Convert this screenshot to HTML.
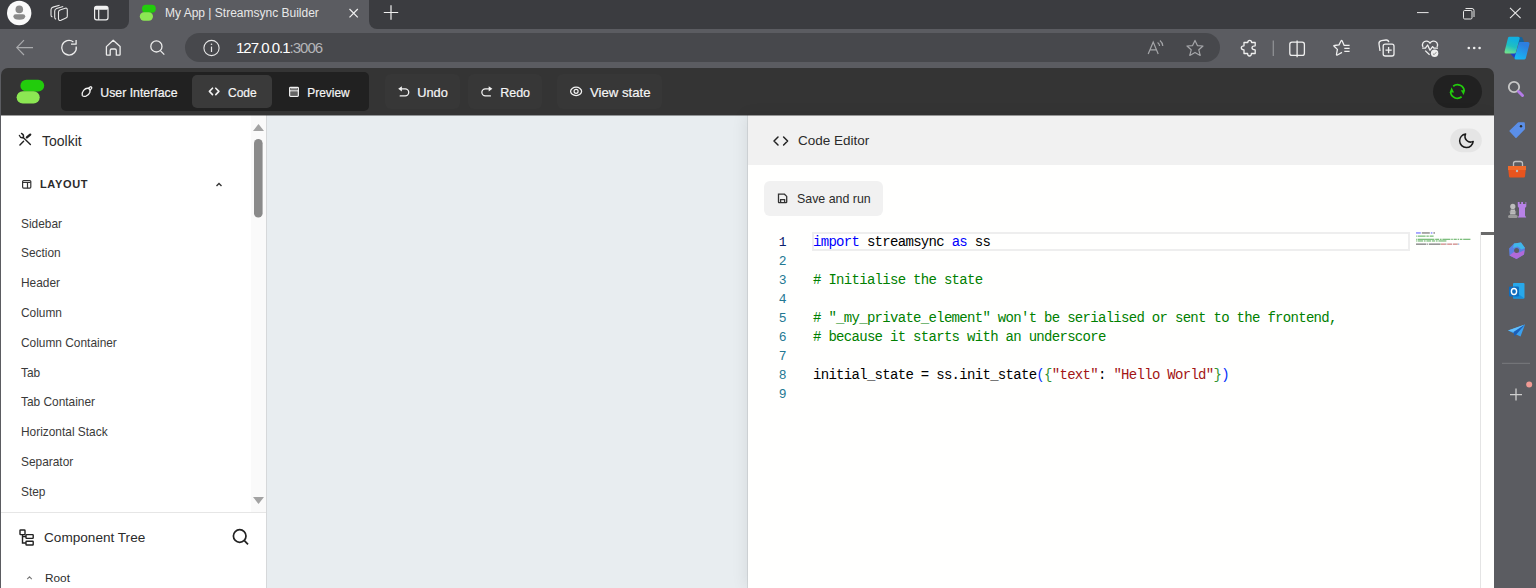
<!DOCTYPE html>
<html><head><meta charset="utf-8">
<style>
*{box-sizing:border-box;margin:0;padding:0}
html,body{width:1536px;height:588px;overflow:hidden;background:#5b5c61;font-family:"Liberation Sans",sans-serif;position:relative}
.abs{position:absolute}
svg{position:absolute;overflow:visible}
#tsl{left:0;top:0;width:129px;height:29px;background:#3b3c40;border-bottom-right-radius:8px}
#tsr{left:369px;top:0;width:1167px;height:29px;background:#3b3c40;border-bottom-left-radius:8px}
#pill{left:185px;top:33px;width:1035px;height:29px;background:#47484c;border-radius:15px}
#url{left:236px;top:39px;font-size:15px;letter-spacing:-1px;color:#fff;white-space:nowrap;line-height:18px}
#url span{color:#b4b5b8}
#tabtitle{left:165px;top:5px;font-size:12px;color:#e8e8e8;white-space:nowrap;line-height:16px}
#app{left:1px;top:68px;width:1493px;height:520px;background:#fff;border-radius:7px 7px 0 0;overflow:hidden}
#topbar{left:0;top:0;width:1493px;height:47px;background:#343434}
#side{left:0;top:47px;width:266px;height:473px;background:#fff;border-right:1px solid #d9d9d9}
#canvas{left:266px;top:47px;width:482px;height:473px;background:#e8edf0}
#editor{left:747px;top:47px;width:746px;height:473px;background:#fefefc}
#edhead{left:0;top:0;width:746px;height:50px;background:#f1f1f1}
#rsb{left:1494px;top:68px;width:42px;height:520px;background:#5b5c61}
.tb{top:85px;color:#f5f5f5;-webkit-text-stroke:0.2px #f5f5f5;line-height:16px;white-space:nowrap}
.code{font-family:"Liberation Mono",monospace;font-size:14px;letter-spacing:-0.7px;line-height:19px;color:#000;white-space:pre}
.k{color:#0000ff}.c{color:#008000}.s{color:#a31515}.b1{color:#0431fa}.b2{color:#319331}
</style></head><body>
<!-- tab strip -->
<div id="tsl" class="abs"></div>
<div id="tsr" class="abs"></div>
<svg style="left:0;top:0" width="130" height="29">
  <circle cx="19.2" cy="13" r="12.2" fill="#fafafa"/>
  <circle cx="19.3" cy="9.4" r="3.8" fill="#8a8a8a"/>
  <path d="M15.6 14.2 H23 Q25.2 14.2 25.2 16.3 Q25.2 19.8 19.3 19.8 Q13.4 19.8 13.4 16.3 Q13.4 14.2 15.6 14.2 Z" fill="#8a8a8a"/>
  <g fill="none" stroke="#e8e8e8" stroke-width="1.1">
    <path d="M59.6 5.2 L53 7.1 Q51 7.7 51 9.7 V15 Q51 16.6 52.4 16.9"/>
    <path d="M63.2 6.5 L56.6 8.5 Q54.7 9.1 54.7 11.1 V17.2 Q54.7 18.8 56.1 19.1"/>
    <path d="M60.6 9.7 L65.2 8.3 Q67.3 7.7 67.3 9.9 V16.2 Q67.3 17.6 65.9 18.1 L61 20.2 Q58.5 21.1 58.5 18.6 V11.9 Q58.5 10.3 60.6 9.7 Z"/>
  </g>
  <g fill="none" stroke="#f0f0f0" stroke-width="1.2">
    <rect x="94.6" y="6.4" width="13.4" height="13.4" rx="2"/>
    <path d="M98.7 9.5 V19.8"/>
  </g>
  <rect x="94.6" y="6.4" width="13.4" height="3.4" rx="1.5" fill="#f0f0f0"/>
</svg>
<svg style="left:139px;top:4px" width="18" height="18">
  <rect x="3" y="0.8" width="13.8" height="8" rx="4" fill="#22cc0c"/>
  <rect x="0.8" y="8.2" width="13.2" height="8.5" rx="4.2" fill="#8ce753"/>
</svg>
<div id="tabtitle" class="abs">My App | Streamsync Builder</div>
<svg style="left:348px;top:8px" width="12" height="12">
  <path d="M1.5 1 L9.8 9.3 M9.8 1 L1.5 9.3" stroke="#f0f0f0" stroke-width="1.2"/>
</svg>
<svg style="left:382px;top:4px" width="18" height="18">
  <path d="M9 1.2 V15.8 M1.8 8.5 H16.2" stroke="#f0f0f0" stroke-width="1.2"/>
</svg>
<!-- window controls -->
<svg style="left:1410px;top:4px" width="120" height="20">
  <path d="M7 8.6 H18.6" stroke="#e8e8e8" stroke-width="1"/>
  <rect x="53.5" y="6.5" width="8.5" height="8.5" rx="1.2" fill="none" stroke="#e8e8e8" stroke-width="1"/>
  <path d="M55.5 4.5 H62 Q64 4.5 64 6.5 V13" fill="none" stroke="#e8e8e8" stroke-width="1"/>
  <path d="M100 3.8 L110.6 14.2 M110.6 3.8 L100 14.2" stroke="#e8e8e8" stroke-width="1.1"/>
</svg>
<!-- toolbar -->
<svg style="left:0;top:30px" width="180" height="36">
  <g fill="none" stroke="#a9aaad" stroke-width="1.2">
    <path d="M17 17.6 H33 M24 10.2 L16.8 17.6 L24 25"/>
  </g>
  <g fill="none" stroke="#ececec" stroke-width="1.3" stroke-linejoin="round">
    <path d="M76.2 16.5 A7.3 7.3 0 1 1 73.4 11.9"/>
    <path d="M71 14.2 H76.1 V10"/>
    <path d="M106.4 16.6 L113.2 10.2 L120.1 16.6 V24.5 Q120.1 25.2 119.4 25.2 H116.3 V20.4 Q116.3 19 114.9 19 H111.6 Q110.2 19 110.2 20.4 V25.2 H107.1 Q106.4 25.2 106.4 24.5 Z"/>
    <circle cx="156.4" cy="16.4" r="5.6"/>
    <path d="M160.4 20.6 L164.3 24.6"/>
  </g>
</svg>
<div id="pill" class="abs"></div>
<svg style="left:200px;top:37px" width="24" height="24">
  <circle cx="11.5" cy="11" r="7.6" fill="none" stroke="#e6e6e6" stroke-width="1.1"/>
  <path d="M11.5 9.6 V15" stroke="#e6e6e6" stroke-width="1.2"/>
  <circle cx="11.5" cy="7.3" r="0.8" fill="#e6e6e6"/>
</svg>
<div id="url" class="abs">127.0.0.1<span>:3006</span></div>
<svg style="left:1140px;top:32px" width="400" height="32">
  <g fill="none" stroke="#a4a5a8" stroke-width="1.2">
    <path d="M8.2 22 L13.2 10 L18.2 22 M10 17.8 H16.4"/>
    <path d="M17.6 10.4 Q19.4 11.6 19.6 14 M19.9 8.4 Q22.6 10.4 22.8 14"/>
    <path d="M55 8.4 L57.4 13.6 L63 14 L58.8 17.8 L60.2 23.4 L55 20.4 L49.8 23.4 L51.2 17.8 L47 14 L52.6 13.6 Z" stroke-linejoin="round"/>
  </g>
  <path d="M133.3 8.6 V24" stroke="#8f9094" stroke-width="1.3"/>
  <g fill="none" stroke="#efefef" stroke-width="1.3" stroke-linejoin="round">
    <path d="M104 10.5 H107.8 Q107.8 8.3 109.7 8.3 Q111.6 8.3 111.6 10.5 H115.2 V13.8 Q112 13.8 112 15.8 Q112 17.8 115.2 17.8 V21.5 H111.4 Q111.4 24 109.5 24 Q107.6 24 107.6 21.5 H104 V17.8 Q101.3 17.8 101.3 15.8 Q101.3 13.8 104 13.8 Z"/>
    <rect x="149.8" y="10.2" width="14.6" height="13.2" rx="2.2"/>
    <path d="M157.1 8.4 V25.2"/>
    <path d="M202 20.4 L197.4 23 Q196.3 23.5 196.5 22.3 L197.4 17.4 L194.1 14.3 Q193.4 13.6 194.4 13.5 L199 12.9 L201.1 8.8 Q201.6 8 202.1 8.8 L204.2 13.4 H209.6 M204.3 16.4 H209.6 M204.3 19.4 H209.6"/>
    <path d="M240 19 L239 12 Q238.6 9.2 241.4 8.6 L246 8 Q248.4 7.8 248.8 10.2"/>
    <rect x="243.2" y="12.2" width="10.8" height="11.8" rx="2"/>
    <path d="M248.6 15 V21.2 M245.5 18.1 H251.7"/>
    <path d="M283 15 Q281.8 12.6 283 10.8 Q284.6 8.8 287 9.2 Q289 9.6 290 11.2 Q291 9.6 293 9.2 Q295.4 8.8 297 10.8 Q298.2 12.6 297 15"/>
    <path d="M282.2 16.2 H285.4 L287.6 13 L290 18.2 L292.6 14.6 L294 16.2 H298"/>
    <path d="M285.2 18.6 L289.6 22.8"/>
  </g>
  <circle cx="294.6" cy="21.3" r="3.7" fill="#efefef"/>
  <path d="M292.9 21.6 L294.1 22.7 L296.3 20.2" fill="none" stroke="#8a8a8a" stroke-width="1"/>
  <g fill="#efefef"><circle cx="328.8" cy="16" r="1.3"/><circle cx="334.2" cy="16" r="1.3"/><circle cx="339.6" cy="16" r="1.3"/></g>
</svg>
<svg style="left:1502px;top:36px" width="30" height="24">
  <defs>
    <linearGradient id="cp1" x1="0" y1="1" x2="0.3" y2="0"><stop offset="0" stop-color="#6fe08e"/><stop offset="0.5" stop-color="#1fc0c0"/><stop offset="1" stop-color="#12b0e0"/></linearGradient>
    <linearGradient id="cp2" x1="0" y1="1" x2="0.4" y2="0"><stop offset="0" stop-color="#16b8f4"/><stop offset="1" stop-color="#2d7fe0"/></linearGradient>
  </defs>
  <path d="M15.5 1.8 L19.5 1.8 L22 7.2 L17 7.2 Z" fill="#15649e" stroke="#15649e" stroke-width="1.5" stroke-linejoin="round"/>
  <path d="M8.5 16.5 L13 16.5 L13.8 22.6 Z" fill="#1f3fc4" stroke="#1f3fc4" stroke-width="1.5" stroke-linejoin="round"/>
  <path d="M7.5 2.2 L16.2 2.2 L12.4 16 L4 16 Z" fill="url(#cp1)" stroke="url(#cp1)" stroke-width="3" stroke-linejoin="round"/>
  <path d="M18.2 7.6 L26 7.6 L22.4 22 L14 22 Z" fill="url(#cp2)" stroke="url(#cp2)" stroke-width="3" stroke-linejoin="round"/>
</svg>
<!-- app -->
<div class="abs" style="left:1px;top:68px;width:1493px;height:47px;background:#343434;border-radius:7px 7px 0 0"></div>
<svg style="left:14px;top:78px" width="32" height="28">
  <rect x="6.4" y="1.7" width="23.8" height="11.9" rx="5.95" fill="#22cc0c"/>
  <rect x="2.6" y="13.2" width="23.1" height="12.3" rx="6.15" fill="#8ce753"/>
</svg>
<div class="abs" style="left:61px;top:72px;width:308px;height:39px;background:#212121;border-radius:5px"></div>
<div class="abs" style="left:192px;top:75px;width:80px;height:33px;background:#3a3a3a;border-radius:5px"></div>
<div class="abs" style="left:385px;top:74px;width:75px;height:35px;background:#373737;border-radius:6px"></div>
<div class="abs" style="left:468px;top:74px;width:74px;height:35px;background:#373737;border-radius:6px"></div>
<div class="abs" style="left:557px;top:74px;width:105px;height:35px;background:#373737;border-radius:6px"></div>
<div class="tb abs" style="left:100.3px;font-size:12.3px">User Interface</div>
<div class="tb abs" style="left:228px;font-size:12px">Code</div>
<div class="tb abs" style="left:307.3px;font-size:11.9px">Preview</div>
<div class="tb abs" style="left:417.2px;font-size:12.8px">Undo</div>
<div class="tb abs" style="left:500.2px;font-size:12.5px">Redo</div>
<div class="tb abs" style="left:590px;font-size:13.2px">View state</div>
<svg style="left:0;top:68px" width="700" height="47">
  <path d="M398.2 20.8 L401.9 18.2 V23.4 Z" fill="#f2f2f2"/>
  <path d="M492.4 20.8 L488.7 18.2 V23.4 Z" fill="#f2f2f2"/>
  <g fill="none" stroke="#f2f2f2" stroke-width="1.3" stroke-linejoin="round" stroke-linecap="round">
    <path d="M82.3 27.6 Q81.4 25.2 83.6 22.4 Q86 19.6 88.6 20.4 Q90.6 21.6 89.9 24.2 Q88.8 27.2 86 28.2 Q83.6 28.9 82.3 27.6 Z"/>
    <path d="M88.4 20.2 L90.4 18.8 Q91.6 18.6 91.8 20 L90.4 22"/>
    <path d="M212.5 20.2 L209.4 23.4 L212.5 26.6 M215.8 20.2 L218.9 23.4 L215.8 26.6" stroke-width="1.6"/>
    <rect x="289.7" y="19.3" width="8.6" height="9" rx="0.8"/>
    <path d="M291.2 20.9 H296.8" stroke-width="1"/>
    <path d="M289.8 22.9 H298.2" stroke-width="1.4"/>
    <rect x="290.4" y="23.8" width="7.2" height="3.8" fill="rgba(255,255,255,0.3)" stroke="none"/>
    <path d="M302 0"/>
    <path d="M401.6 20.8 H405.2 A3.55 3.55 0 0 1 405.2 27.9 H400.2"/>
    <path d="M489 20.8 H485.4 A3.55 3.55 0 0 0 485.4 27.9 H490.4"/>
    <ellipse cx="576.1" cy="23.35" rx="5.5" ry="4.2" stroke-width="1.25"/>
    <circle cx="576.1" cy="23.35" r="2" stroke-width="1.2"/>
  </g>
</svg>
<div class="abs" style="left:1433px;top:75px;width:49px;height:33px;background:#212121;border-radius:16.5px"></div>
<svg style="left:1445px;top:80px" width="24" height="24">
  <g fill="none" stroke="#22cc0c" stroke-width="1.8">
    <path d="M8.2 6.2 A6.8 6.8 0 0 1 19.2 11"/>
    <path d="M16.6 16.8 A6.8 6.8 0 0 1 5.6 12"/>
  </g>
  <path d="M15.8 10.2 L20.2 10.2 L18.6 14.9 Z" fill="#22cc0c"/>
  <path d="M4.6 12.6 L9 12.6 L6.6 7.3 Z" fill="#22cc0c"/>
</svg>
<!-- sidebar -->
<div class="abs" style="left:1px;top:115px;width:265px;height:473px;background:#fff"></div>
<div class="abs" style="left:251px;top:115px;width:15px;height:397px;background:#fafafa"></div>
<div class="abs" style="left:266px;top:115px;width:1px;height:473px;background:#d6d8da"></div>
<div class="abs" style="left:1px;top:512px;width:265px;height:1px;background:#e6e6e6"></div>
<svg style="left:251px;top:115px" width="15" height="400">
  <path d="M2 16 L7.5 9 L13 16 Z" fill="#a3a3a3"/>
  <rect x="3" y="24" width="8.6" height="78.5" rx="4.3" fill="#8a8a8a"/>
  <path d="M2 382 L7.5 389 L13 382 Z" fill="#a3a3a3"/>
</svg>
<div class="abs" style="left:42px;top:133px;font-size:14px;color:#2b2b2b;line-height:16px">Toolkit</div>
<div class="abs" style="left:40px;top:177px;font-size:11px;font-weight:bold;letter-spacing:0.65px;color:#2b2b2b;line-height:14px">LAYOUT</div>
<div id="items" class="abs" style="left:21px;top:209.7px;font-size:11.9px;color:#3a3a3a;line-height:29.8px">Sidebar<br>Section<br>Header<br>Column<br>Column Container<br>Tab<br>Tab Container<br>Horizontal Stack<br>Separator<br>Step</div>
<div class="abs" style="left:44px;top:530px;font-size:13.6px;color:#2b2b2b;line-height:16px">Component Tree</div>
<div class="abs" style="left:45px;top:570px;font-size:11.8px;color:#2b2b2b;line-height:16px">Root</div>
<svg style="left:0;top:115px" width="266" height="473">
  <g fill="none" stroke="#222" stroke-width="1.4" stroke-linecap="round">
    <path d="M23.2 22.6 L30.4 29.6"/>
    <path d="M19.4 20.4 Q20.4 23.4 23.3 22.6 Q24.3 19.8 21.5 18.4"/>
    <path d="M26.9 22.4 L30.2 19.6" stroke-width="2.3"/>
    <path d="M19.9 30 L23.6 26.3"/>
  </g>
  <g fill="none" stroke="#333" stroke-width="1.2">
    <rect x="22.6" y="65.5" width="8.2" height="7.6" rx="1"/>
    <path d="M22.6 67.4 H30.6 M27.5 67.4 V73.2"/>
    <path d="M216.5 71 L219 68.5 L221.5 71" stroke-width="1.4"/>
  </g>
  <g fill="none" stroke="#222" stroke-width="1.4">
    <rect x="20" y="415" width="5" height="4.6" rx="0.6"/>
    <path d="M22.5 419.6 V428 H26 M22.5 421.5 H26"/>
    <rect x="26" y="419.6" width="7.2" height="3.8" rx="0.6"/>
    <rect x="26" y="426.2" width="7.2" height="3.8" rx="0.6"/>
    <circle cx="239.7" cy="421" r="6.3" stroke-width="1.7"/>
    <path d="M244.4 425.7 L248 429.4" stroke-width="1.7"/>
    <path d="M27.2 464.2 L29.5 461.9 L31.8 464.2" stroke-width="1.1" stroke="#777"/>
  </g>
</svg>
<!-- canvas -->
<div class="abs" style="left:267px;top:115px;width:481px;height:473px;background:#e8edf0"></div>
<!-- editor -->
<div class="abs" style="left:748px;top:115px;width:746px;height:473px;background:#fffffe;box-shadow:-1px 0 0 rgba(0,0,0,0.08),-3px 0 14px rgba(0,0,0,0.07)"></div>
<div class="abs" style="left:748px;top:115px;width:746px;height:50px;background:#f1f1f1"></div>
<svg style="left:748px;top:115px" width="746" height="120">
  <g fill="none" stroke="#222" stroke-width="1.5" stroke-linecap="round" stroke-linejoin="round">
    <path d="M30 22 L26 26 L30 30 M35.6 22 L39.6 26 L35.6 30"/>
  </g>
  <rect x="702.2" y="13.5" width="31.6" height="23.8" rx="11.9" fill="#e5e5e5"/>
  <path d="M717.6 19 A6.8 6.8 0 1 0 725.2 26.4 A5.6 5.6 0 0 1 717.6 19 Z" fill="none" stroke="#1a1a1a" stroke-width="1.5" stroke-linejoin="round"/>
</svg>
<div class="abs" style="left:798px;top:133px;font-size:13.5px;color:#2b2b2b;line-height:16px">Code Editor</div>
<div class="abs" style="left:764px;top:181px;width:119px;height:35px;background:#f1f1f1;border-radius:6px"></div>
<svg style="left:776px;top:192px" width="14" height="14">
  <g fill="none" stroke="#333" stroke-width="1.3">
    <path d="M2.5 2.2 H8.5 L10.7 4.4 V9.9 Q10.7 10.6 10 10.6 H3.2 Q2.5 10.6 2.5 9.9 Z"/>
    <path d="M4.6 10.6 V7.6 H8.6 V10.6"/>
  </g>
</svg>
<div class="abs" style="left:797px;top:191px;font-size:12.4px;color:#2b2b2b;line-height:16px">Save and run</div>
<!-- code -->
<div class="abs" style="left:812px;top:232px;width:598px;height:19px;border:2px solid #eeeeee"></div>
<div class="abs" style="left:759.5px;top:233px;width:27px;text-align:right;font-family:'Liberation Mono',monospace;font-size:13px;letter-spacing:0;line-height:19px;color:#237893;white-space:pre"><span style="color:#0b216f">1</span>
2
3
4
5
6
7
8
9</div>
<div class="abs code" style="left:813px;top:233px"><span class="k">import</span> streamsync <span class="k">as</span> ss

<span class="c"># Initialise the state</span>

<span class="c"># "_my_private_element" won't be serialised or sent to the frontend,</span>
<span class="c"># because it starts with an underscore</span>

initial_state = ss.init_state<span class="b1">(</span><span class="b2">{</span><span class="s">"text"</span>: <span class="s">"Hello World"</span><span class="b2">}</span><span class="b1">)</span>
</div>
<!-- minimap -->
<svg style="left:1416px;top:232px" width="60" height="16">
  <g opacity="0.5">
  <rect x="0.0" y="0.3" width="4.8" height="1.3" fill="#0000ff"/>
  <rect x="5.8" y="0.3" width="8.0" height="1.3" fill="#000"/>
  <rect x="14.8" y="0.3" width="1.6" height="1.3" fill="#0000ff"/>
  <rect x="17.4" y="0.3" width="1.6" height="1.3" fill="#000"/>
  <rect x="0.0" y="3.5" width="0.8" height="1.3" fill="#008000"/>
  <rect x="1.6" y="3.5" width="8.0" height="1.3" fill="#008000"/>
  <rect x="10.4" y="3.5" width="2.4" height="1.3" fill="#008000"/>
  <rect x="13.6" y="3.5" width="4.0" height="1.3" fill="#008000"/>
  <rect x="0.0" y="6.7" width="0.8" height="1.3" fill="#008000"/>
  <rect x="1.6" y="6.7" width="16.8" height="1.3" fill="#008000"/>
  <rect x="19.2" y="6.7" width="4.0" height="1.3" fill="#008000"/>
  <rect x="24.0" y="6.7" width="1.6" height="1.3" fill="#008000"/>
  <rect x="26.4" y="6.7" width="8.0" height="1.3" fill="#008000"/>
  <rect x="35.2" y="6.7" width="1.6" height="1.3" fill="#008000"/>
  <rect x="37.6" y="6.7" width="3.2" height="1.3" fill="#008000"/>
  <rect x="41.6" y="6.7" width="1.6" height="1.3" fill="#008000"/>
  <rect x="44.0" y="6.7" width="2.4" height="1.3" fill="#008000"/>
  <rect x="47.2" y="6.7" width="7.2" height="1.3" fill="#008000"/>
  <rect x="0.0" y="8.3" width="0.8" height="1.3" fill="#008000"/>
  <rect x="1.6" y="8.3" width="5.6" height="1.3" fill="#008000"/>
  <rect x="8.0" y="8.3" width="1.6" height="1.3" fill="#008000"/>
  <rect x="10.4" y="8.3" width="4.8" height="1.3" fill="#008000"/>
  <rect x="16.0" y="8.3" width="3.2" height="1.3" fill="#008000"/>
  <rect x="20.0" y="8.3" width="1.6" height="1.3" fill="#008000"/>
  <rect x="22.4" y="8.3" width="8.0" height="1.3" fill="#008000"/>
  <rect x="0.0" y="11.5" width="10.4" height="1.3" fill="#000"/>
  <rect x="11.2" y="11.5" width="0.8" height="1.3" fill="#000"/>
  <rect x="12.8" y="11.5" width="11.2" height="1.3" fill="#000"/>
  <rect x="24.0" y="11.5" width="0.8" height="1.3" fill="#319331"/>
  <rect x="24.8" y="11.5" width="4.8" height="1.3" fill="#a31515"/>
  <rect x="29.6" y="11.5" width="0.8" height="1.3" fill="#000"/>
  <rect x="31.2" y="11.5" width="4.8" height="1.3" fill="#a31515"/>
  <rect x="36.8" y="11.5" width="4.8" height="1.3" fill="#a31515"/>
  <rect x="41.6" y="11.5" width="0.8" height="1.3" fill="#319331"/>
  <rect x="42.4" y="11.5" width="0.8" height="1.3" fill="#0431fa"/>
  </g>
</svg>
<div class="abs" style="left:1480px;top:232px;width:14px;height:3px;background:#6a6a6a"></div>
<div class="abs" style="left:1480px;top:232px;width:1px;height:356px;background:#e4e4e4"></div>
<div class="abs" style="left:1px;top:115px;width:1493px;height:1px;background:rgba(40,40,40,0.45)"></div>
<!-- edge right sidebar -->
<div class="abs" style="left:1494px;top:68px;width:42px;height:520px;background:#5b5c61"></div>
<svg style="left:1494px;top:68px" width="42" height="520">
  <circle cx="20" cy="19" r="5.2" fill="none" stroke="#c8c8c8" stroke-width="1.8"/>
  <path d="M24.5 23.5 L28.5 27.5" stroke="#b57be8" stroke-width="3" stroke-linecap="round"/>
  <path d="M16.2 63 L24.5 55 L30 55 L30.3 60.6 L22 69.2 Z" fill="#5b8fe8" stroke="#5b8fe8" stroke-width="1.6" stroke-linejoin="round"/>
  <circle cx="27" cy="58.2" r="1.2" fill="#2a2a2a"/>
  <path d="M19.5 98 V95.5 Q19.5 93.5 21.5 93.5 H26.5 Q28.5 93.5 28.5 95.5 V98" fill="none" stroke="#c0c0c0" stroke-width="1.3"/>
  <path d="M14.5 98 H31.5 Q32.2 98 32 99 L31 108.5 Q30.8 109.5 30 109.5 H16 Q15.2 109.5 15 108.5 L14 99 Q13.8 98 14.5 98 Z" fill="#e8541e"/>
  <rect x="14" y="98" width="18" height="4" fill="#f06a2a"/>
  <circle cx="23" cy="103" r="1.2" fill="#bbb"/>
  <circle cx="18.8" cy="138.4" r="2.6" fill="#bdbdbd"/>
  <path d="M16.6 141.5 H21 L21.6 146.5 H16 Z" fill="#bdbdbd"/>
  <path d="M15.5 144 H22.2" stroke="#aaa" stroke-width="1"/>
  <rect x="14" y="147" width="9.6" height="3" rx="1.5" fill="#9a9a9a"/>
  <path d="M23.8 134 H25.6 V136 H27.2 V134 H29 V136 H31.5 V134 H32.3 V138.5 L31 140 V147.5 L32.3 149.5 H23.8 L25 147.5 V140 L23.8 138.5 Z" fill="#b782e6"/>
  <path d="M20 175.5 L27 174.5 L31 180 L30 186.5 L22.5 191 L15.5 187.5 L15 180.5 Z" fill="#5b7fe0"/>
  <path d="M20 175.5 L27 174.5 L31 180 L27.5 181.5 L23.5 178.5 L19 180 Z" fill="#3fb7e8"/>
  <path d="M15.5 187.5 L22.5 191 L30 186.5 L30.5 182 L25.5 184.5 L20.5 183.5 Z" fill="#b06ad8"/>
  <circle cx="22.6" cy="182.4" r="2.5" fill="#5b5c61"/>
  <rect x="19" y="215" width="11.5" height="15.5" rx="1" fill="#28a8ea"/>
  <path d="M19 222 L30.5 230.5 H19 Z" fill="#1490df"/>
  <rect x="15" y="218.5" width="10" height="10" rx="1" fill="#0f6cbd"/>
  <ellipse cx="20" cy="223.5" rx="2.6" ry="3" fill="none" stroke="#fff" stroke-width="1.4"/>
  <path d="M14 262.5 L31 256.5 L26.5 268.5 Z" fill="#3aa0f0"/>
  <path d="M14 262.5 L31 256.5 L19.5 264 Z" fill="#62c0ff"/>
  <path d="M19.5 264 L31 256.5 L20.5 268.5 Z" fill="#1b5fb8"/>
  <path d="M8 295.3 H36" stroke="#7a7b7f" stroke-width="1"/>
  <path d="M22 320.6 V332.6 M16 326.6 H28" stroke="#cfcfcf" stroke-width="1.3"/>
  <circle cx="35.2" cy="316.5" r="3" fill="#f19a94"/>
</svg>
</body></html>
